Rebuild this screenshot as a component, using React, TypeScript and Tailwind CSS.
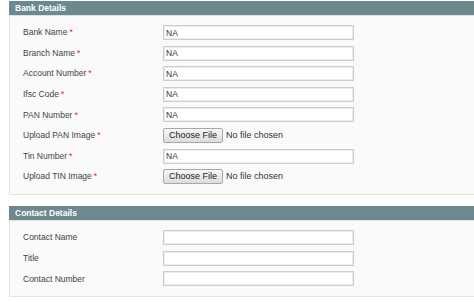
import React from 'react';

type Field = { label: string; required?: boolean; kind: 'text' | 'file'; value?: string };

const bankFields: Field[] = [
  { label: 'Bank Name', required: true, kind: 'text', value: 'NA' },
  { label: 'Branch Name', required: true, kind: 'text', value: 'NA' },
  { label: 'Account Number', required: true, kind: 'text', value: 'NA' },
  { label: 'Ifsc Code', required: true, kind: 'text', value: 'NA' },
  { label: 'PAN Number', required: true, kind: 'text', value: 'NA' },
  { label: 'Upload PAN Image', required: true, kind: 'file' },
  { label: 'Tin Number', required: true, kind: 'text', value: 'NA' },
  { label: 'Upload TIN Image', required: true, kind: 'file' },
];

const contactFields: Field[] = [
  { label: 'Contact Name', kind: 'text', value: '' },
  { label: 'Title', kind: 'text', value: '' },
  { label: 'Contact Number', kind: 'text', value: '' },
];

const FieldRow = ({ field }: { field: Field }) => (
  <div className="flex items-center h-[15px]">
    <label className="w-[153px] pl-[13px] text-[8.5px] text-[#444] leading-none">
      {field.label}
      {field.required && <span className="text-[#d22] ml-[2px]">*</span>}
    </label>
    {field.kind === 'text' ? (
      <input
        type="text"
        defaultValue={field.value}
        className="w-[191px] h-[15px] bg-white border border-[#cdcdcd] shadow-[inset_0_0_0_1px_#ececec] px-[2px] text-[8.5px] text-[#333] outline-none"
      />
    ) : (
      <div className="flex items-center h-[15px]">
        <button className="h-[15px] w-[60px] border border-[#a8a8a8] rounded-[2px] bg-gradient-to-b from-[#f8f8f8] to-[#dcdcdc] text-[9px] text-[#222] leading-none">
          Choose File
        </button>
        <span className="ml-[3px] text-[9px] text-[#333] leading-none">No file chosen</span>
      </div>
    )}
  </div>
);

const Panel = ({ title, fields, className }: { title: string; fields: Field[]; className?: string }) => (
  <section className={className}>
    <div className="h-[15px] bg-[#6e8890] border-b border-[#d5e4e7] pl-[6px] text-[8.5px] font-bold text-white leading-[14px]">
      {title}
    </div>
    <div className="bg-[#fafafa] border-l border-b border-[#e2e2e2] flex flex-col gap-[5.6px] pt-[9px] pb-[10px]">
      {fields.map((f) => (
        <FieldRow key={f.label} field={f} />
      ))}
    </div>
  </section>
);

const App = () => {
  return (
    <div className="w-[474px] h-[302px] overflow-hidden bg-white pl-[9px] pt-[1px] font-['Liberation_Sans',Arial,sans-serif]">
      <Panel title="Bank Details" fields={bankFields} />
      <Panel title="Contact Details" fields={contactFields} className="mt-[11px]" />
    </div>
  );
};

export default App;
